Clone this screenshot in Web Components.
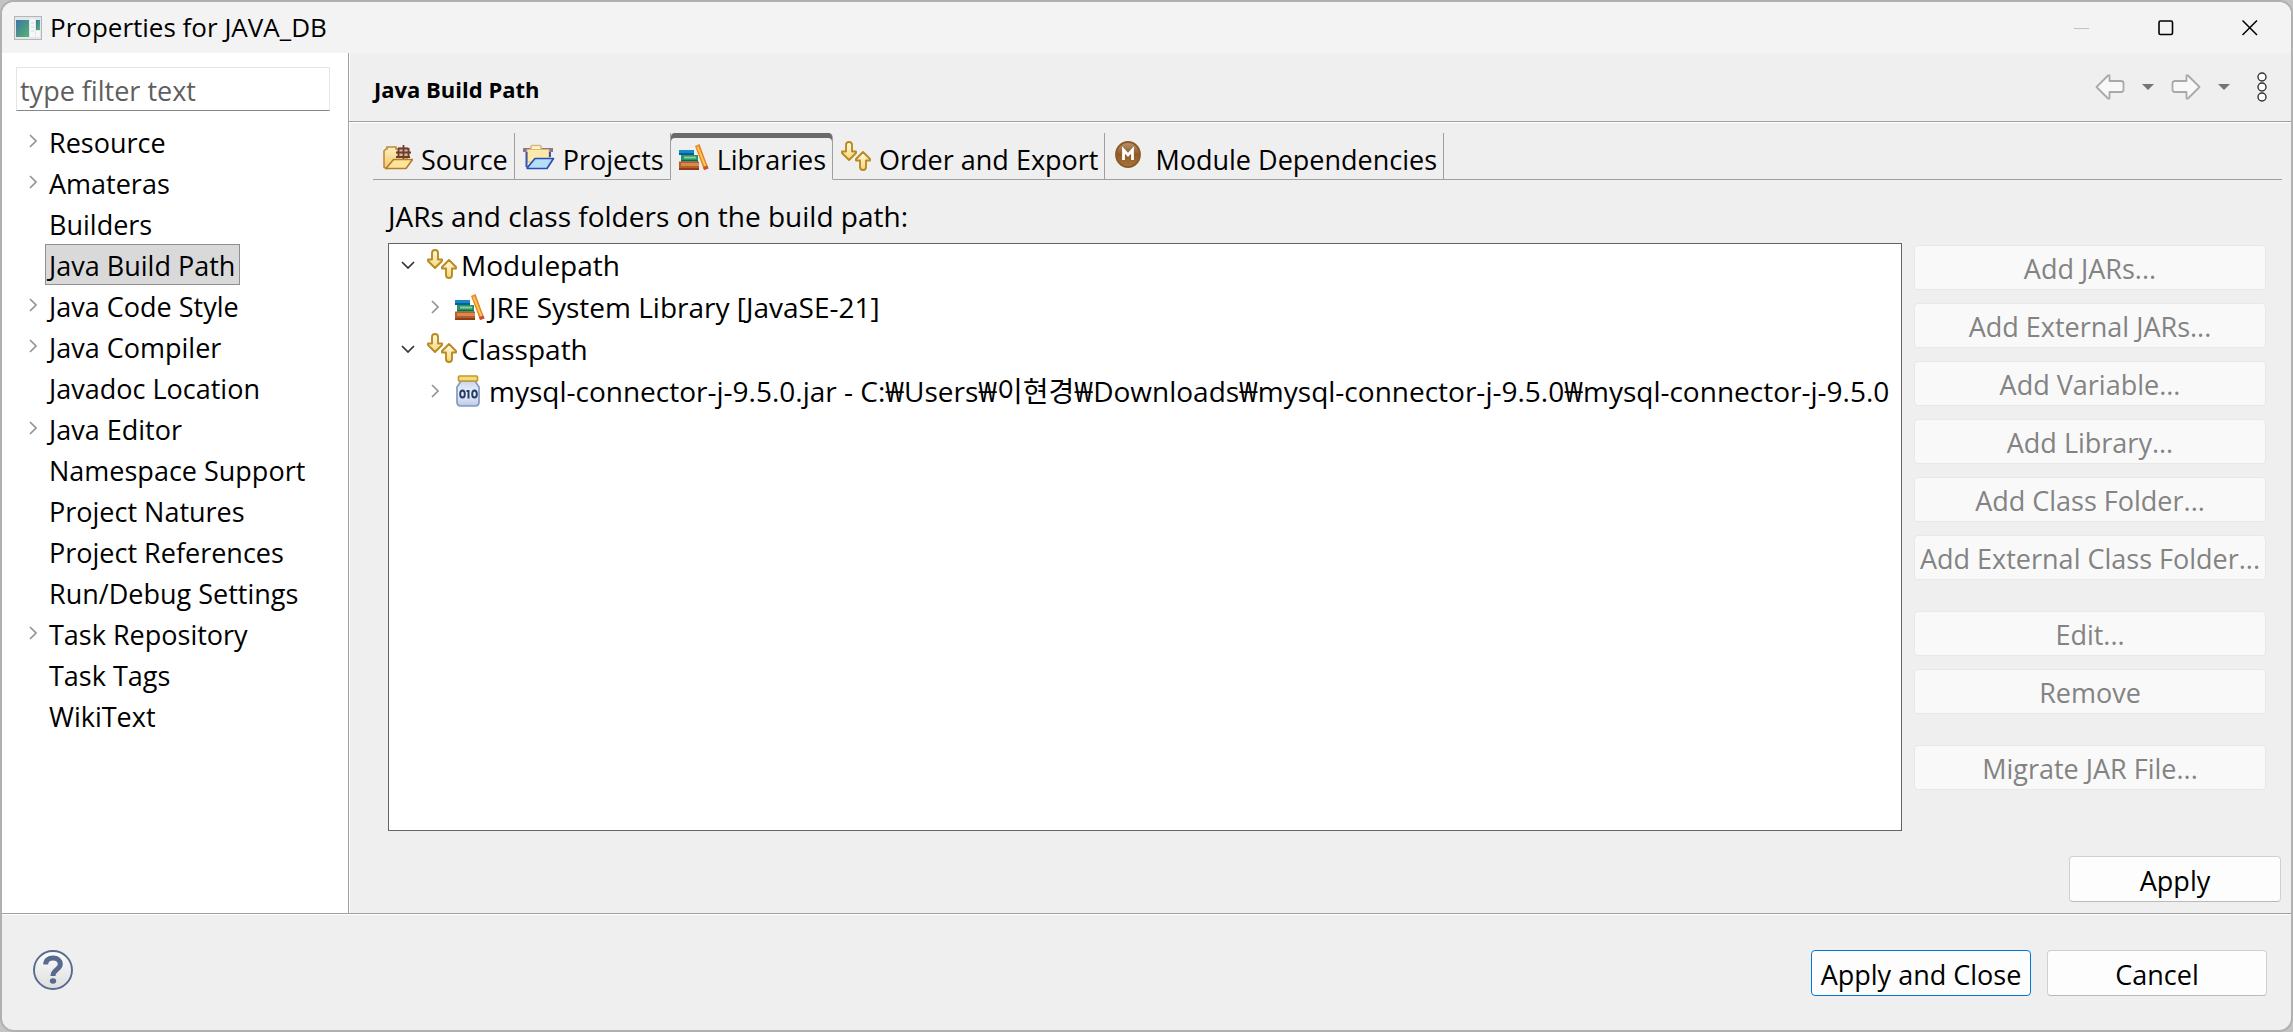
<!DOCTYPE html>
<html lang="en">
<head>
<meta charset="utf-8">
<title>Properties for JAVA_DB</title>
<style>
  html, body { margin: 0; height: 100%; }
  body {
    background: #c4c4c4;
    font: 27px/40px "Open Sans", "Noto Sans", "Noto Sans CJK KR", sans-serif;
    color: #000;
    overflow: hidden;
  }
</style>
</head>
<body>
<properties-dialog></properties-dialog>

<script>
const ICONS = {
  app: [28, 24, `<defs><linearGradient id="a" x1="0" y1="0" x2="1" y2="1"><stop offset="0" stop-color="#3a74a8"/><stop offset="1" stop-color="#57b56a"/></linearGradient></defs>
    <rect x=".5" y=".5" width="27" height="23" fill="#e4e7ea" stroke="#b3b7bb"/><rect x="2" y="4" width="13" height="17" fill="url(#a)"/>
    <rect x="16" y="3" width="5" height="18" fill="#f6f7f8"/><path d="M17 7h3M17 11h3M17 15h3" stroke="#d3d6d9"/><rect x="22" y="4" width="4" height="10" fill="url(#a)"/><rect x="22" y="15" width="4" height="6" fill="#f6f7f8"/>`],
  min: [16, 16, `<path d="M0 8.500h15" stroke="#c2c2c2"/>`],
  max: [16, 16, `<rect x="1" y="1" width="13.500" height="13.500" rx="1.500" fill="none" stroke="#000" stroke-width="1.600"/>`],
  close: [16, 16, `<path d="M.5.5l14.500 14.500M15 .5L.5 15" stroke="#000" stroke-width="1.500"/>`],
  back: [30, 26, `<path d="M1.500 13L13 1.500h1.500V7H26q2.500 0 2.500 2.500v6Q28.500 18 26 18H14.500v6.500H13z" fill="#f8f8f8" stroke="#a9a9a9" stroke-width="1.800" stroke-linejoin="round"/>`],
  forward: [30, 26, `<path d="M28.500 13L17 1.500h-1.500V7H4Q1.500 7 1.500 9.500v6Q1.500 18 4 18h11.500v6.500H17z" fill="#f8f8f8" stroke="#a9a9a9" stroke-width="1.800" stroke-linejoin="round"/>`],
  drop: [12, 6, `<path d="M0 0h12L6 6z" fill="#75747b"/>`],
  dots: [10, 30, `<g fill="#fff" stroke="#333" stroke-width="1.400"><circle cx="5" cy="5" r="4"/><circle cx="5" cy="15" r="4"/><circle cx="5" cy="25" r="4"/></g>`],
  right: [8, 14, `<path d="M1 1l6 6-6 6" fill="none" stroke="#949494" stroke-width="1.700"/>`],
  down: [14, 8, `<path d="M1 1l6 6 6-6" fill="none" stroke="#333" stroke-width="1.700"/>`],
  source: [30, 26, `<defs><linearGradient id="s" x1="0" y1="0" x2="0" y2="1"><stop offset="0" stop-color="#fff0bd"/><stop offset="1" stop-color="#efc771"/></linearGradient></defs>
    <path d="M1 23V7l2-2h1V3h9v2h11v12L3 24.500z" fill="url(#s)" stroke="#bd8c3c" stroke-width="1.600"/>
    <path d="M14.500 3.500h12v10h-12z" fill="#d9b79b"/><path d="M15 4.500h10M13 8.500h15M13 13h14M15.500 4v10M20.500 1v14M25.500 4v10" stroke="#6a3d2d" stroke-width="1.800"/>
    <path d="M3 24.500l7.500-9H29.500l-6.500 9z" fill="#ffe49a" stroke="#b57c2b" stroke-width="1.600" stroke-linejoin="round"/>`],
  projects: [32, 26, `<path d="M0 4h30v4H0z" fill="#8b7788"/><path d="M8 6V3q0-1.500 1.500-1.500h7Q18 1.500 18 3v3" fill="#fff6d5" stroke="#d8b878" stroke-width="1.600"/>
    <path d="M4 5.500h22V18H4z" fill="#fde9a9" stroke="#dcba73"/><path d="M3.500 8v15M27 8v5" stroke="#3d55ad" stroke-width="2"/>
    <path d="M4 24l8-9.500h18.500L24 24.500H4.500z" fill="#b4defa" stroke="#2d4cb4" stroke-width="1.700" stroke-linejoin="round"/>`],
  library: [30, 26, `<path d="M0 6h15v4H0z" fill="#168acb"/><path d="M0 9h15v2H0z" fill="#095d97"/><path d="M2 11h17v6.500H2z" fill="#24966b"/><path d="M5 12.500h12v2H5z" fill="#8ccf91"/><path d="M2 16h17v1.500H2z" fill="#0c6a49"/>
    <path d="M0 17.500h20V26H0z" fill="#b65d2c"/><path d="M2 19h18v3H2z" fill="#d9894f"/><path d="M0 24h20v2H0z" fill="#8f3d16"/>
    <path d="M16 2l4.500-2L29.500 24.500 25 26z" fill="#e9842d"/><path d="M18.500 2.500L27 24" stroke="#f8d04e" stroke-width="1.800"/><path d="M25 26l4.500-1.500-1-3-4.500 1.500z" fill="#c8503b"/>`],
  order: [30, 32, `<defs><linearGradient id="o" x1="0" y1="0" x2="0" y2="1"><stop offset="0" stop-color="#fffbe0"/><stop offset="1" stop-color="#f6d77b"/></linearGradient></defs>
    <g fill="url(#o)" stroke="#b98a22" stroke-width="1.900" stroke-linejoin="round"><path d="M5 10.500V4Q5 1 8 1t3 3v6.500h4V12l-7 7-7-7v-1.500z"/><path d="M19 19.500V26q0 3 3 3t3-3v-6.500h4V18l-7-7-7 7v1.500z"/></g>`],
  module: [34, 32, `<defs><linearGradient id="m" x1="0" y1="0" x2="0" y2="1"><stop offset="0" stop-color="#b99571"/><stop offset=".5" stop-color="#8e5b26"/><stop offset="1" stop-color="#a8733f"/></linearGradient></defs>
    <ellipse cx="15" cy="13.500" rx="12" ry="12.500" fill="url(#m)" stroke="#8a5a22" stroke-width="1.800"/><path d="M10.500 19V9l4.500 5 4.500-5v10" fill="none" stroke="#fff" stroke-width="2.800"/>`],
  jar: [26, 32, `<defs><linearGradient id="j" x1="0" y1="0" x2="0" y2="1"><stop offset="0" stop-color="#c8d6ee"/><stop offset=".5" stop-color="#f1f5fc"/><stop offset="1" stop-color="#b9c8e2"/></linearGradient></defs>
    <path d="M6 6h14l4 6v15q0 4-4 4H6q-4 0-4-4V12z" fill="url(#j)" stroke="#8398c2" stroke-width="1.700"/><rect x="3.500" y="1" width="19" height="5" rx="1" fill="#f4dc7c" stroke="#c39a28" stroke-width="1.700"/>
    <g fill="none" stroke="#243a68" stroke-width="2"><ellipse cx="7.500" cy="19" rx="2.300" ry="3.500"/><path d="M13.500 15v8.500M11.500 16h2"/><ellipse cx="19.500" cy="19" rx="2.300" ry="3.500"/></g>`],
  help: [40, 40, `<defs><linearGradient id="h" x1="0" y1="0" x2="0" y2="1"><stop offset="0" stop-color="#fcfcfc"/><stop offset="1" stop-color="#dedede"/></linearGradient></defs>
    <circle cx="20" cy="20" r="19" fill="url(#h)" stroke="#576a8f" stroke-width="1.900"/><path d="M12.700 14.500c0-4.500 3-6.500 7.300-6.500s7.300 2.500 7.300 6.300c0 5.200-7.300 5.200-7.300 11.700" fill="none" stroke="#576a8f" stroke-width="5"/><ellipse cx="20" cy="31" rx="3.200" ry="2.800" fill="#576a8f"/>`]
};

function define(name, markup, setup) {
  const template = document.createElement('template');
  template.innerHTML = markup;
  customElements.define(name, class extends HTMLElement {
    connectedCallback() {
      if (this.shadowRoot) return;
      this.attachShadow({ mode: 'open' }).append(template.content.cloneNode(true));
      if (setup) setup(this, this.shadowRoot);
    }
  });
}

function iconMarkup(name) {
  return `<ui-icon name="${name}"></ui-icon>`;
}

define('ui-icon', `<style>:host{display:block;flex:none}svg{display:block}</style>`, (host, root) => {
  const [w, h, body] = ICONS[host.getAttribute('name')];
  root.innerHTML += `<svg width="${w}" height="${h}" viewBox="0 0 ${w} ${h}" aria-hidden="true">${body}</svg>`;
});

define('push-button', `<style>
  :host{display:block;min-width:0}
  button{box-sizing:border-box;display:block;width:100%;height:46px;padding:3px 0 0;font:inherit;line-height:40px;color:#000;white-space:nowrap;
    background:#fdfdfd;border:1px solid #d0d0d0;border-bottom-color:#bababa;border-radius:4px}
  button:disabled{color:#838383;background:#f9f9f9;border-color:#e8e8e8;height:45px}
  :host([primary]) button{border-color:#0078d4}
</style><button type="button"><slot></slot></button>`, (host, root) => {
  root.querySelector('button').disabled = host.hasAttribute('disabled');
});

define('icon-button', `<style>
  :host{display:block}
  button{display:flex;padding:0;border:0;background:none}
</style><button type="button"></button>`, (host, root) => {
  const button = root.querySelector('button');
  button.setAttribute('aria-label', host.getAttribute('label'));
  button.innerHTML = iconMarkup(host.getAttribute('icon'));
});

define('title-bar', `<style>
  :host{display:flex;align-items:center;height:51px;background:#f3f3f3;padding:0 33px 0 12px;gap:8px;font-size:26px}
  .name{flex:1;padding-bottom:2px}
  .controls{display:flex;gap:68px}
</style><ui-icon name="app"></ui-icon><span class="name"><slot></slot></span>
<div class="controls"><icon-button icon="min" label="Minimize"></icon-button><icon-button icon="max" label="Maximize"></icon-button><icon-button icon="close" label="Close"></icon-button></div>`);

define('page-item', `<style>
  :host{display:flex;align-items:center;height:41px}
  .twist{width:16px;padding-bottom:2px}
  .label{box-sizing:border-box;height:41px;padding:0 4px 0 3px;border:1px solid transparent;white-space:nowrap}
  :host([selected]) .label{background:#d9d9d9;border-color:#8f8f8f}
  .label slot{display:block;line-height:41px}
</style><span class="twist"></span><span class="label"><slot></slot></span>`, (host, root) => {
  host.setAttribute('role', 'treeitem');
  if (host.hasAttribute('expandable')) root.querySelector('.twist').innerHTML = iconMarkup('right');
});

define('page-nav', `<style>
  :host{display:block;box-sizing:border-box;width:346px;flex:none;background:#fff;padding:14px 18px 0 14px}
  input{box-sizing:border-box;display:block;width:100%;height:44px;padding:2px 3px 0;border:1px solid #e5e5e5;border-bottom-color:#868686;background:#fff;font:inherit;color:#000;outline:0}
  input::placeholder{color:#5f5f5f;opacity:1}
  nav{padding:10px 0 0 13px}
</style><input type="text" aria-label="Filter" placeholder="type filter text"><nav role="tree"><slot></slot></nav>`);

define('page-header', `<style>
  :host{display:flex;align-items:center;height:68px;padding:0 24px 0 25px;border-bottom:1px solid #a0a0a0;box-shadow:0 1px #fff}
  h1{flex:1;margin:0;padding-top:4px;font-size:22px;font-weight:700;line-height:32px}
  .tools{display:flex;align-items:center;gap:17px}
  .menu{padding-left:10px}
</style><h1><slot></slot></h1><div class="tools"><icon-button icon="back" label="Back"></icon-button><icon-button icon="drop" label="Back history"></icon-button><icon-button icon="forward" label="Forward"></icon-button><icon-button icon="drop" label="Forward history"></icon-button><icon-button class="menu" icon="dots" label="View menu"></icon-button></div>`);

define('tab-item', `<style>
  :host{display:block;border-right:1px solid #a0a0a0;border-bottom:1px solid #a0a0a0}
  button{box-sizing:border-box;display:flex;align-items:center;gap:8px;height:46px;width:100%;padding:2px 6px 0 8px;border:0;background:none;font:inherit;line-height:40px;color:#000;white-space:nowrap}
  :host(:first-child) button{padding-left:10px}
  .label{padding-top:6px}
  :host([selected]){border-bottom-color:transparent;border-radius:5px 5px 0 0;box-shadow:inset 0 1px #a0a0a0}
  :host([selected]) button{box-shadow:inset 0 5px #6a6a6a;border-radius:4px 4px 0 0}
</style><button type="button" role="tab"><span class="pic"></span><span class="label"><slot></slot></span></button>`, (host, root) => {
  root.querySelector('.pic').innerHTML = iconMarkup(host.getAttribute('icon'));
  root.querySelector('button').setAttribute('aria-selected', host.hasAttribute('selected'));
});

define('tab-bar', `<style>
  :host{display:flex;margin:11px 9px 0 24px}
  .tabs{display:flex}
  .rest{flex:1;border-bottom:1px solid #a0a0a0}
</style><div class="tabs" role="tablist"><slot></slot></div><div class="rest"></div>`);

define('path-item', `<style>
  :host{display:flex;align-items:center;height:42px;padding-left:12px;white-space:nowrap}
  :host([child]){padding-left:42px}
  .twist{width:26px;flex:none}
  :host([child]) .twist{width:24px}
  .pic{min-width:34px;flex:none}
  span{line-height:42px}
</style><div class="twist"></div><div class="pic"></div><span><slot></slot></span>`, (host, root) => {
  host.setAttribute('role', 'treeitem');
  root.querySelector('.twist').innerHTML = iconMarkup(host.hasAttribute('child') ? 'right' : 'down');
  root.querySelector('.pic').innerHTML = iconMarkup(host.getAttribute('icon'));
});

define('path-tree', `<style>
  :host{display:block;box-sizing:border-box;flex:1;min-width:0;background:#fff;border:1px solid #646464;overflow:hidden;font-size:28px}
</style><div role="tree"><slot></slot></div>`);

define('build-path-page', `<style>
  :host{display:flex;flex-direction:column;flex:1;min-width:0;border-left:1px solid #a0a0a0;box-shadow:inset 1px 0 #fff}
  .caption{padding:16px 0 0 39px;font-size:28px;line-height:40px}
  .work{display:flex;flex:1;gap:12px;padding:7px 25px 0 39px}
  .actions{display:flex;flex-direction:column;gap:13px;width:352px;flex:none;padding-top:2px}
  .group{padding-top:18px}
  .apply{align-self:flex-end;width:212px;padding:25px 10px 11px 0}
</style>
<page-header>Java Build Path</page-header>
<tab-bar><tab-item icon="source">Source</tab-item><tab-item icon="projects">Projects</tab-item><tab-item icon="library" selected>Libraries</tab-item><tab-item icon="order">Order and Export</tab-item><tab-item icon="module">Module Dependencies</tab-item></tab-bar>
<div class="caption">JARs and class folders on the build path:</div>
<div class="work">
  <path-tree>
    <path-item icon="order">Modulepath</path-item>
    <path-item icon="library" child>JRE System Library [JavaSE-21]</path-item>
    <path-item icon="order">Classpath</path-item>
    <path-item icon="jar" child>mysql-connector-j-9.5.0.jar - C:₩Users₩이현경₩Downloads₩mysql-connector-j-9.5.0₩mysql-connector-j-9.5.0</path-item>
  </path-tree>
  <div class="actions">
    <push-button disabled>Add JARs...</push-button>
    <push-button disabled>Add External JARs...</push-button>
    <push-button disabled>Add Variable...</push-button>
    <push-button disabled>Add Library...</push-button>
    <push-button disabled>Add Class Folder...</push-button>
    <push-button disabled>Add External Class Folder...</push-button>
    <push-button class="group" disabled>Edit...</push-button>
    <push-button disabled>Remove</push-button>
    <push-button class="group" disabled>Migrate JAR File...</push-button>
  </div>
</div>
<push-button class="apply">Apply</push-button>`);

define('dialog-footer', `<style>
  :host{display:flex;align-items:center;height:117px;box-sizing:border-box;padding:0 24px 0 31px;border-top:1px solid #a0a0a0;box-shadow:inset 0 1px #fff}
  .help{flex:1;padding-bottom:4px}
  .buttons{display:flex;gap:16px;padding-top:2px}
  push-button{width:220px}
</style><icon-button class="help" icon="help" label="Help"></icon-button><div class="buttons"><push-button primary>Apply and Close</push-button><push-button>Cancel</push-button></div>`);

define('properties-dialog', `<style>
  :host{display:flex;flex-direction:column;box-sizing:border-box;height:100vh;border:2px solid #b0b0b0;border-radius:14px;background:#efefef;overflow:hidden}
  .body{display:flex;flex:1;min-height:0}
</style>
<title-bar>Properties for JAVA_DB</title-bar>
<div class="body">
  <page-nav>
    <page-item expandable>Resource</page-item><page-item expandable>Amateras</page-item><page-item>Builders</page-item><page-item selected>Java Build Path</page-item><page-item expandable>Java Code Style</page-item><page-item expandable>Java Compiler</page-item><page-item>Javadoc Location</page-item><page-item expandable>Java Editor</page-item><page-item>Namespace Support</page-item><page-item>Project Natures</page-item><page-item>Project References</page-item><page-item>Run/Debug Settings</page-item><page-item expandable>Task Repository</page-item><page-item>Task Tags</page-item><page-item>WikiText</page-item>
  </page-nav>
  <build-path-page></build-path-page>
</div>
<dialog-footer></dialog-footer>`);
</script>
</body>
</html>
